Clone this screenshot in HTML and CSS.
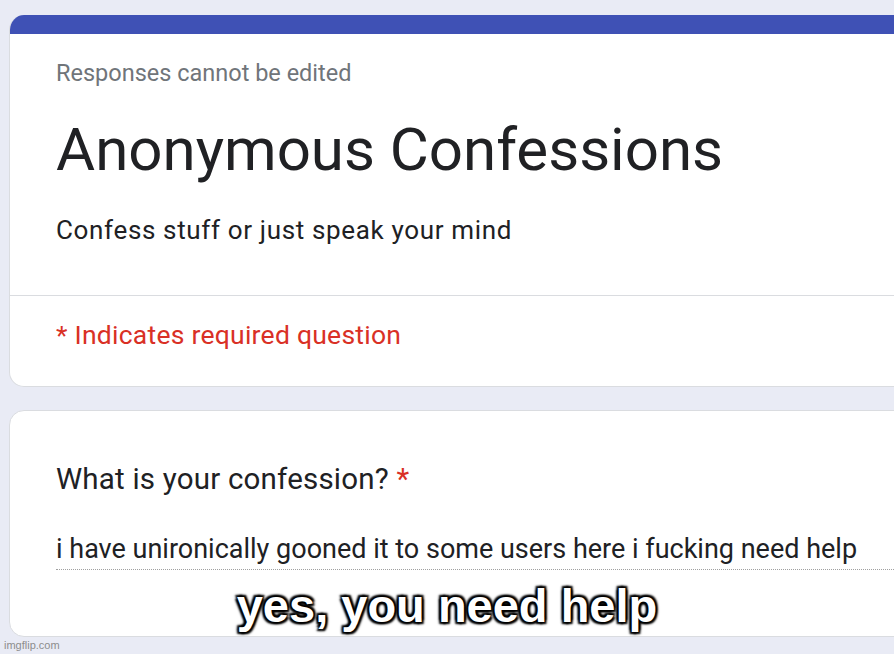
FILE: index.html
```html
<!DOCTYPE html>
<html>
<head>
<meta charset="utf-8">
<link rel="stylesheet" href="styles.css">
</head>
<body>
<main class="page">
  <section class="card header-card">
    <div class="band"></div>
    <div class="header-body">
      <div class="note">Responses cannot be edited</div>
      <h1 class="title">Anonymous Confessions</h1>
      <div class="subtitle">Confess stuff or just speak your mind</div>
    </div>
    <div class="required-row">* Indicates required question</div>
  </section>
  <section class="card question-card">
    <div class="question">What is your confession? <span class="star">*</span></div>
    <div class="answer">i have unironically gooned it to some users here i fucking need help</div>
  </section>
</main>
<div class="meme">yes, you need help</div>
<div class="watermark">imgflip.com</div>
</body>
</html>
```
FILE: styles.css
```css
html, body {
  margin: 0;
  padding: 0;
}
body {
  width: 894px;
  height: 654px;
  overflow: hidden;
  background: #e9ebf5;
  font-family: Roboto, "Liberation Sans", sans-serif;
  position: relative;
}
.page {
  padding: 15px 0 0 9px;
  display: flex;
  flex-direction: column;
  gap: 23px;
  width: 1100px;
}
.card {
  background: #fff;
  border: 1px solid #dadce0;
  border-radius: 15px;
  overflow: hidden;
}
.header-card {
  border-top: none;
}
.band {
  height: 19px;
  background: #3f51b5;
}
.header-body {
  padding: 23px 46px 49px;
  border-bottom: 1px solid #dadce0;
}
.note {
  font-size: 23.5px;
  line-height: 32px;
  color: #70757a;
}
.title {
  margin: 25px 0 0;
  font-size: 60px;
  font-weight: 400;
  line-height: 72px;
  color: #202124;
}
.subtitle {
  margin-top: 28px;
  font-size: 26px;
  letter-spacing: 0.65px;
  line-height: 32px;
  color: #202124;
}
.required-row {
  padding: 24px 46px 36px;
  font-size: 26.5px;
  letter-spacing: 0.25px;
  line-height: 30px;
  color: #d93025;
}
.question-card {
  height: 225px;
  padding: 0 46px;
}
.question {
  margin-top: 51px;
  font-size: 29.5px;
  letter-spacing: 0.2px;
  line-height: 34px;
  color: #202124;
}
.star {
  color: #d93025;
}
.answer {
  margin-top: 37.5px;
  font-size: 27px;
  line-height: 30px;
  color: #202124;
  padding-bottom: 5px;
  border-bottom: 1px dotted #a0a0a0;
}
.meme {
  position: absolute;
  left: 0;
  right: 0;
  top: 580px;
  text-align: center;
  font-family: "Liberation Sans", Arial, sans-serif;
  font-weight: 700;
  font-size: 47px;
  line-height: 52px;
  color: #fff;
  text-shadow: 2px 2px 2px #000, -2px -2px 2px #000, 2px -2px 2px #000, -2px 2px 2px #000, 0 0 4px #000, 0 0 3px #000;
}
.watermark {
  position: absolute;
  left: 4px;
  top: 639px;
  font-family: "Liberation Sans", Arial, sans-serif;
  font-size: 11px;
  line-height: 13px;
  color: #8d8d8d;
}
```
